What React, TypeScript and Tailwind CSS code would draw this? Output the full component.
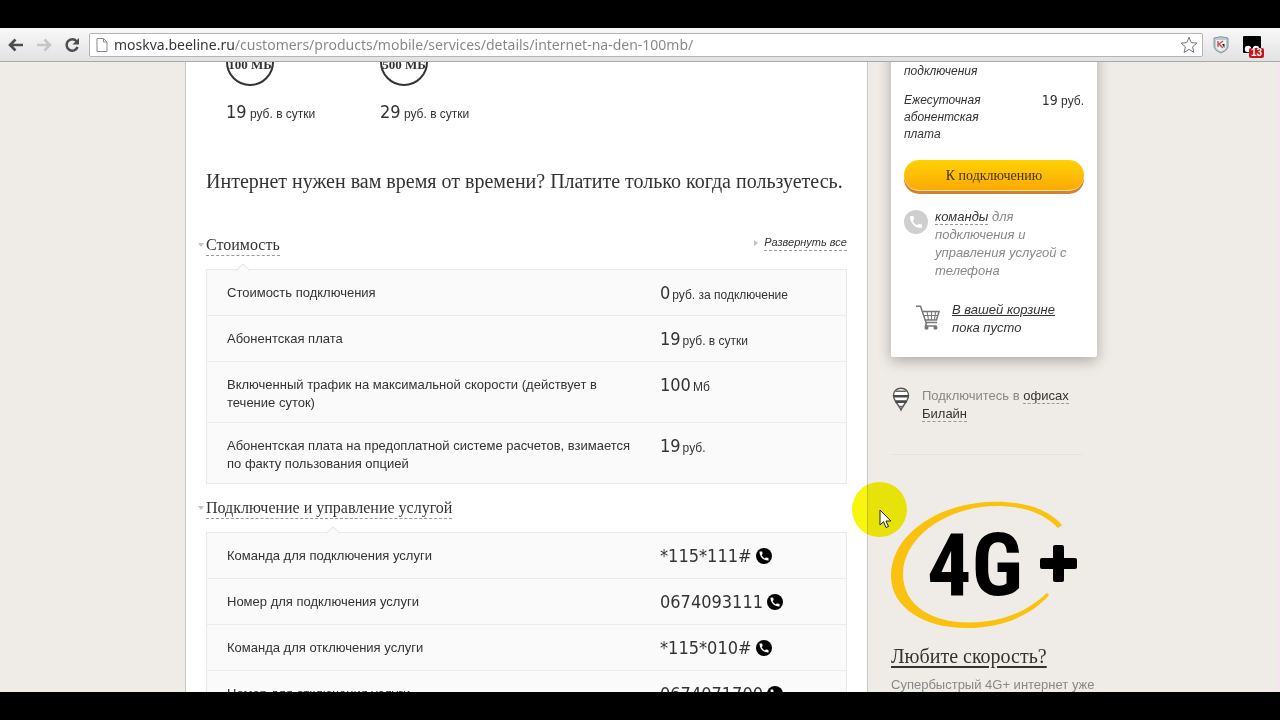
// src/App.tsx
import React from "react";
import { MdCall } from "react-icons/md";

const serif = "font-['Liberation_Serif',serif]";
const digits = "font-['DejaVu_Sans_Condensed','Open_Sans',sans-serif]";

const plans = [
  { size: "100 МБ", price: "19" },
  { size: "500 МБ", price: "29" },
];

const costs = [
  { label: "Стоимость подключения", value: "0", unit: "руб. за подключение" },
  { label: "Абонентская плата", value: "19", unit: "руб. в сутки" },
  {
    label: "Включенный трафик на максимальной скорости (действует в течение суток)",
    value: "100",
    unit: "Мб",
  },
  {
    label:
      "Абонентская плата на предоплатной системе расчетов, взимается по факту пользования опцией",
    value: "19",
    unit: "руб.",
  },
];

const commands = [
  { label: "Команда для подключения услуги", value: "*115*111#" },
  { label: "Номер для подключения услуги", value: "0674093111" },
  { label: "Команда для отключения услуги", value: "*115*010#" },
  { label: "Номер для отключения услуги", value: "0674071700" },
];

const BrowserBar: React.FC = () => (
  <header className="relative z-10 flex h-[34px] shrink-0 items-center border-b border-[#a9a9a9] bg-linear-to-b from-[#f8f8f8] to-[#e2e2e2] pl-2">
    <button type="button" aria-label="Назад" className="w-7">
      <svg width="16" height="14" viewBox="0 0 16 14" fill="none" stroke="#4d4d4d" strokeWidth="2.6">
        <path d="M15 7H3M7.500 1.500 2 7l5.500 5.500" />
      </svg>
    </button>
    <button type="button" aria-label="Вперёд" className="w-7">
      <svg width="16" height="14" viewBox="0 0 16 14" fill="none" stroke="#c6c6c6" strokeWidth="2.600">
        <path d="M1 7h12M8.500 1.500 14 7l-5.500 5.500" />
      </svg>
    </button>
    <button type="button" aria-label="Обновить" className="w-[25px]">
      <svg width="16" height="16" viewBox="0 0 16 16">
        <path d="M12.600 4.200A5.700 5.700 0 1 0 13.600 10" fill="none" stroke="#4d4d4d" strokeWidth="2.500" />
        <path d="M15 1v6.500H8.500z" fill="#4d4d4d" />
      </svg>
    </button>
    <div className="flex h-6 flex-1 items-center rounded-xs border border-[#b5b5b5] bg-white pr-1 pl-1.5">
      <svg width="12" height="16" viewBox="0 0 12 16" fill="#fff" stroke="#8a8a8a">
        <path d="M1 1.500h6.500L11 5v9.500H1zM7.500 1.500V5H11" />
      </svg>
      <input
        type="text"
        aria-label="Адрес"
        defaultValue="moskva.beeline.ru/customers/products/mobile/services/details/internet-na-den-100mb/"
        className="ml-1.5 h-5 flex-1 bg-[linear-gradient(90deg,#333_120px,#858585_120px)] bg-clip-text font-['Noto_Sans',sans-serif] text-sm text-transparent outline-none"
      />
      <svg width="18" height="18" viewBox="0 0 18 18" fill="#fff" stroke="#777">
        <path d="m9 1.300 2.200 5.300 5.700.5-4.300 3.700 1.300 5.600L9 13.400l-4.900 3 1.300-5.600-4.300-3.700 5.700-.5z" />
      </svg>
    </div>
    <div className="flex w-[77px] items-center gap-3.5 pl-2.5">
      <svg width="16" height="18" viewBox="0 0 16 18">
        <path d="M1 2q7-2.500 14 0v9q-1 4-7 6-6-2-7-6z" fill="#b9cdd0" stroke="#84989c" />
        <path d="M3 4h10v7q-1 3-5 4-4-1-5-4z" fill="#eef1f1" />
        <path d="M5 5v6M10 5 6 8l4 4" fill="none" stroke="#d35450" strokeWidth="1.500" />
        <path d="M9 8h2.500v4z" fill="#222" />
      </svg>
      <div className="relative">
        <svg width="18" height="18" viewBox="0 0 18 18">
          <rect width="18" height="17" rx="1" fill="#000" />
          <circle cx="5" cy="13" r="3.200" fill="#fff" />
          <circle cx="13" cy="13" r="3.200" fill="#fff" />
        </svg>
        <span className="absolute top-3 left-1.5 rounded-xs bg-[#c4161c] px-0.5 font-['Liberation_Sans',sans-serif] text-[10px] leading-[10px] font-bold text-white">
          13
        </span>
      </div>
    </div>
  </header>
);

const SectionTitle: React.FC<{ children: React.ReactNode }> = ({ children }) => (
  <div className="relative flex">
    <span className="absolute top-2 -left-2 h-0 w-0 border-x-3 border-t-4 border-x-transparent border-t-[#c4c4c4]" />
    <button
      type="button"
      className={`${serif} border-b border-dashed border-[#999] text-[16px] leading-5 text-[#333]`}
    >
      {children}
    </button>
  </div>
);

const Table: React.FC<{ children: React.ReactNode; notch: string }> = ({ children, notch }) => (
  <div className="relative mt-[13px] border border-[#e9e9e9] bg-[#fafafa]">
    <svg className={`absolute -top-[7px] ${notch}`} width="14" height="8" viewBox="0 0 14 8">
      <path d="M0 7.500 7 .8l7 6.700" fill="#fafafa" stroke="#e0e0e0" />
    </svg>
    <table className="w-full table-fixed border-collapse text-left">
      <tbody>{children}</tbody>
    </table>
  </div>
);

const Row: React.FC<{ label: string; children: React.ReactNode }> = ({ label, children }) => (
  <tr className="border-b border-[#ececec] align-top last:border-b-0">
    <th scope="row" className="w-[433px] pt-3 pr-2 pb-2.5 pl-5 text-[13px] leading-[18px] font-normal">
      <div className="pt-0.5">{label}</div>
    </th>
    <td className="py-3 pl-5 leading-[21px]">{children}</td>
  </tr>
);

const Sidebar: React.FC = () => (
  <aside className="w-[206px] shrink-0">
    <div className="rounded-b-xs bg-white px-[13px] pt-[25px] pb-5 shadow-[0_4px_14px_rgba(0,0,0,0.28)]">
      <div className="flex flex-col gap-3 text-[12px] leading-[17px] italic">
        <p>подключения</p>
        <div className="flex justify-between">
          <p className="w-24">Ежесуточная абонентская плата</p>
          <p className="not-italic">
            <span className={`${digits} text-[14px]`}>19</span> руб.
          </p>
        </div>
      </div>
      <button
        type="button"
        className={`${serif} mt-[17px] h-[30px] w-full rounded-full bg-linear-to-b from-[#ffd203] to-[#fba905] text-[14px] text-[#4a3000] shadow-[0_1px_0_#ffdf9a,0_4px_0_#cf8430]`}
      >
        К подключению
      </button>
      <div className="mt-[18px] flex gap-[7px] text-[13px] leading-[18px] text-[#888] italic">
        <span className="mt-0.5 flex h-6 w-6 shrink-0 items-center justify-center rounded-full bg-[#cfcfcf] text-white">
          <MdCall size={16} />
        </span>
        <p>
          <a href="#commands" className="border-b border-dashed border-[#999] text-[#333]">
            команды
          </a>{" "}
          для подключения и управления услугой с телефона
        </p>
      </div>
      <div className="mt-[21px] flex gap-3 pl-3 text-[13px] leading-[18px] italic">
        <svg className="mt-1 shrink-0" width="24" height="25" viewBox="0 0 24 25" fill="none" stroke="#777" strokeWidth="1.500">
          <path d="M0 1.200h4.500L10 17.500h11M6 6.500h17L20.500 15H9" />
          <path d="M7 10.500h15M11 6.500l1.500 8.500M15.500 6.500V15M19.500 6.500 18.500 15" strokeWidth="1.100" />
          <path d="m10.500 17.500-1 3.500h11" />
          <circle cx="10.500" cy="22.800" r="1.300" fill="#777" />
          <circle cx="19.500" cy="22.800" r="1.300" fill="#777" />
        </svg>
        <p>
          <a href="#cart" className="underline">
            В вашей корзине
          </a>
          <br />
          пока пусто
        </p>
      </div>
    </div>

    <div className="mt-[30px] flex gap-3 text-[13px] leading-[18px] text-[#888]">
      <svg className="shrink-0" width="19" height="25" viewBox="0 0 19 25">
        <path d="M10 1.200c-4.500 0-7.500 3.200-7.500 7.200 0 5.500 5 8.600 7.500 14.600 2.500-6 7.500-9.100 7.500-14.600 0-4-3-7.200-7.500-7.200z" fill="#fff" stroke="#555" strokeWidth="1.400" />
        <path d="M2.500 9.200h15M4.500 14.600h11" stroke="#4a4a4a" strokeWidth="2.600" />
        <path d="M4.500 4.200h11M7.500 19.500h5" stroke="#666" strokeWidth="1.600" />
      </svg>
      <p>
        Подключитесь в{" "}
        <a href="#offices" className="border-b border-dashed border-[#999] text-[#333]">
          офисах Билайн
        </a>
      </p>
    </div>
    <hr className="mt-[31px] mr-3.5 border-[#e7e2dd]" />

    <svg className="mt-[45px]" width="190" height="130" viewBox="890 500 190 130" role="img" aria-label="4G+">
      <path
        d="M1061 525C1046 508 1022 501.700 995 501.700 940 501.700 890 533 890 576c0 32 34 52 75 52 35 0 65-12 83-33l-2-2c-20 19-46 29.500-78 29.500-38 0-66-17.500-66-48.500 0-36 43-68 94-68 24 0 46 6 61 22z"
        fill="#fac20f"
      />
      <text x="926" y="595" className="font-['Liberation_Sans_Narrow','Roboto_Condensed',Roboto,sans-serif] text-[88px] font-bold">
        4G
      </text>
      <rect x="1052" y="545" width="11" height="37" rx="2" />
      <rect x="1039" y="558" width="37" height="11" rx="2" />
    </svg>
    <h2 className="mt-3.5 text-[#333]">
      <a href="#speed" className={`${serif} text-[20px] leading-6 underline underline-offset-3`}>
        Любите скорость?
      </a>
    </h2>
    <p className="mt-1.5 text-[13px] leading-[18px] text-[#888]">Супербыстрый 4G+ интернет уже</p>
  </aside>
);

const App: React.FC = () => (
  <div className="flex h-screen flex-col bg-black py-7 font-['Liberation_Sans',sans-serif] text-[#333]">
    <BrowserBar />
    <div className="relative flex-1 overflow-hidden bg-[#efebe6] pl-0.5 shadow-[inset_-4px_0_#f3e6ec]">
      <div className="mx-auto -mt-6 flex max-w-[912px] items-start gap-[23px]">
        <main className="min-w-0 flex-1 border-x border-[#c9c6c3] bg-white px-5">
          <div className="flex pl-5">
            {plans.map((p) => (
              <div key={p.size} className="w-[154px]">
                <div className={`${serif} flex h-12 w-12 items-center justify-center rounded-full border-2 border-[#333] pt-1.5 text-[13px] font-bold whitespace-nowrap`}>
                  {p.size}
                </div>
                <p className="mt-3.5 text-[12px] leading-6">
                  <span className={`${digits} text-[18px]`}>{p.price}</span> руб. в сутки
                </p>
              </div>
            ))}
          </div>
          <h1 className={`${serif} mt-[41px] text-[20px] leading-7 whitespace-nowrap`}>
            Интернет нужен вам время от времени? Платите только когда пользуетесь.
          </h1>
          <div className="mt-10 flex items-start justify-between">
            <SectionTitle>Стоимость</SectionTitle>
            <div className="flex items-center gap-1.5">
              <span className="h-0 w-0 border-y-3 border-l-4 border-y-transparent border-l-[#c4c4c4]" />
              <button type="button" className="border-b border-dashed border-[#999] text-[11px] leading-[15px] italic">
                Развернуть все
              </button>
            </div>
          </div>
          <Table notch="left-[29px]">
            {costs.map((c) => (
              <Row key={c.label} label={c.label}>
                <div className="flex items-baseline gap-0.5">
                  <span className={`${digits} text-[18px]`}>{c.value}</span>
                  <span className="text-[12px] leading-none">{c.unit}</span>
                </div>
              </Row>
            ))}
          </Table>
          <div className="mt-3.5">
            <SectionTitle>Подключение и управление услугой</SectionTitle>
          </div>
          <Table notch="left-[119px]">
            {commands.map((c) => (
              <Row key={c.label} label={c.label}>
                <div className="flex items-center gap-1">
                  <span className={`${digits} text-[18px]`}>{c.value}</span>
                  <span className="flex h-4 w-4 items-center justify-center rounded-full bg-black text-white">
                    <MdCall size={12} />
                  </span>
                </div>
              </Row>
            ))}
          </Table>
        </main>
        <Sidebar />
      </div>

      {/* highlighted mouse pointer */}
      <div className="pointer-events-none absolute top-[420px] left-[852px] h-[55px] w-[55px] rounded-full bg-[#f8f60c] mix-blend-multiply" />
      <svg className="pointer-events-none absolute top-[447px] left-[879px]" width="13" height="20" viewBox="0 0 13 20">
        <path d="M1 1v15l3.500-3.300L7 18.500l2.500-1L7 12h4.800z" fill="#fff" stroke="#222" />
      </svg>
    </div>
  </div>
);

export default App;
